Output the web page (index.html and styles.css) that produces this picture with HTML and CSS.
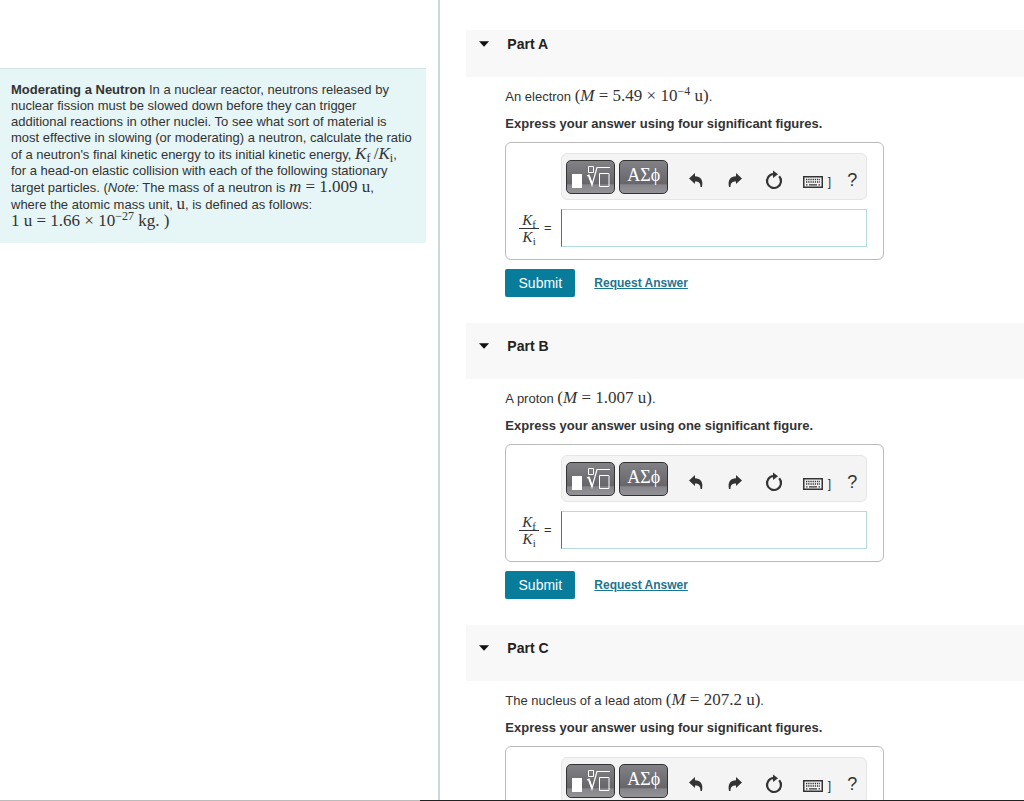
FILE: index.html
```html
<!DOCTYPE html>
<html lang="en">
<head>
<meta charset="utf-8">
<title>Moderating a Neutron</title>
<link rel="stylesheet" href="styles.css">
</head>
<body>
<svg class="sprite" aria-hidden="true">
  <symbol id="i-template" viewBox="0 0 40 28">
    <rect x="1" y="11" width="10" height="14" fill="#fff"/>
    <path d="M17.500 3.500h5v6h-5z M28.500 10.500h9.500v13h-9.500z" fill="none" stroke="#fff"/>
    <path d="M16 13l2-1 3 10 5-17.500h13" fill="none" stroke="#fff" stroke-width="1.200"/>
    <path d="M18 13l3 8" stroke="#fff" stroke-width="2"/>
  </symbol>
  <symbol id="i-undo" viewBox="0 0 16 16">
    <path d="M1 6.500 7 1v3.300c5.500 0 8.500 3.500 7 10.700h-1.500C12.500 11 11 9.500 7 9.500V12z"/>
  </symbol>
  <symbol id="i-redo" viewBox="0 0 16 16">
    <path d="M15 6.500 9 1v3.300c-5.500 0-8.500 3.500-7 10.700h1.500C3.500 11 5 9.500 9 9.500V12z"/>
  </symbol>
  <symbol id="i-reset" viewBox="0 0 20 20">
    <path d="M15.200 6.300A7 7 0 1 1 9.500 4" fill="none" stroke="#333" stroke-width="2.200"/>
    <path d="M9 .5l5 3.800L9 8z"/>
  </symbol>
  <symbol id="i-keyboard" viewBox="0 0 20 12">
    <path d="M.75.75h18.500v10.500H.750z" fill="none" stroke="#333" stroke-width="1.500"/>
    <path d="M3 3.500h14M3 6h14" stroke="#333" stroke-width="1.500" stroke-dasharray="1.300 .9"/>
    <path d="M3 8.800h1.500M6 8.800h8M15.500 8.800H17" stroke="#333" stroke-width="1.300"/>
  </symbol>
  <symbol id="i-caret" viewBox="0 0 12 6"><path d="M0 0h11L5.500 6z" fill="#111"/></symbol>
</svg>
<div class="page">
  <aside class="side">
    <div class="problem">
      <p><strong>Moderating a Neutron</strong> In a nuclear reactor, neutrons released by nuclear fission must be slowed down before they can trigger additional reactions in other nuclei. To see what sort of material is most effective in slowing (or moderating) a neutron, calculate the ratio of a neutron's final kinetic energy to its initial kinetic energy, <span class="math"><i>K</i><sub>f</sub>&thinsp;/<i>K</i><sub>i</sub></span>, for a head-on elastic collision with each of the following stationary target particles. (<em>Note:</em> The mass of a neutron is <span class="math"><i>m</i> = 1.009 u</span>,<br>where the atomic mass unit, <span class="math">u</span>, is defined as follows:<br><span class="math">1 u = 1.66 × 10<sup>−27</sup> kg. )</span></p>
    </div>
  </aside>
  <main class="main">
    <section class="part">
      <header class="part-head first"><svg class="caret"><use href="#i-caret"/></svg><h2>Part A</h2></header>
      <form class="part-body">
        <p class="question">An electron <span class="math">(<i>M</i> = 5.49 × 10<sup>−4</sup> u)</span>.</p>
        <p class="hint">Express your answer using four significant figures.</p>
        <div class="answer">
          <div class="toolbar">
            <button type="button" class="dark" aria-label="Templates"><svg class="template"><use href="#i-template"/></svg></button>
            <button type="button" class="dark greek">ΑΣϕ</button>
            <button type="button" class="tool" aria-label="Undo"><svg><use href="#i-undo"/></svg></button>
            <button type="button" class="tool" aria-label="Redo"><svg><use href="#i-redo"/></svg></button>
            <button type="button" class="tool" aria-label="Reset"><svg class="reset"><use href="#i-reset"/></svg></button>
            <button type="button" class="tool keys" aria-label="Keyboard shortcuts"><svg class="keyboard"><use href="#i-keyboard"/></svg><span>]</span></button>
            <button type="button" class="tool help">?</button>
          </div>
          <label class="ratio" for="a"><span class="frac"><span><i>K</i><sub>f</sub></span><span><i>K</i><sub>i</sub></span></span><span>=</span></label>
          <input id="a" type="text">
        </div>
        <div class="actions"><button type="submit" class="submit">Submit</button><a href="#">Request Answer</a></div>
      </form>
    </section>
    <section class="part">
      <header class="part-head"><svg class="caret"><use href="#i-caret"/></svg><h2>Part B</h2></header>
      <form class="part-body">
        <p class="question">A proton <span class="math">(<i>M</i> = 1.007 u)</span>.</p>
        <p class="hint">Express your answer using one significant figure.</p>
        <div class="answer">
          <div class="toolbar">
            <button type="button" class="dark" aria-label="Templates"><svg class="template"><use href="#i-template"/></svg></button>
            <button type="button" class="dark greek">ΑΣϕ</button>
            <button type="button" class="tool" aria-label="Undo"><svg><use href="#i-undo"/></svg></button>
            <button type="button" class="tool" aria-label="Redo"><svg><use href="#i-redo"/></svg></button>
            <button type="button" class="tool" aria-label="Reset"><svg class="reset"><use href="#i-reset"/></svg></button>
            <button type="button" class="tool keys" aria-label="Keyboard shortcuts"><svg class="keyboard"><use href="#i-keyboard"/></svg><span>]</span></button>
            <button type="button" class="tool help">?</button>
          </div>
          <label class="ratio" for="b"><span class="frac"><span><i>K</i><sub>f</sub></span><span><i>K</i><sub>i</sub></span></span><span>=</span></label>
          <input id="b" type="text">
        </div>
        <div class="actions"><button type="submit" class="submit">Submit</button><a href="#">Request Answer</a></div>
      </form>
    </section>
    <section class="part">
      <header class="part-head"><svg class="caret"><use href="#i-caret"/></svg><h2>Part C</h2></header>
      <form class="part-body">
        <p class="question">The nucleus of a lead atom <span class="math">(<i>M</i> = 207.2 u)</span>.</p>
        <p class="hint">Express your answer using four significant figures.</p>
        <div class="answer">
          <div class="toolbar">
            <button type="button" class="dark" aria-label="Templates"><svg class="template"><use href="#i-template"/></svg></button>
            <button type="button" class="dark greek">ΑΣϕ</button>
            <button type="button" class="tool" aria-label="Undo"><svg><use href="#i-undo"/></svg></button>
            <button type="button" class="tool" aria-label="Redo"><svg><use href="#i-redo"/></svg></button>
            <button type="button" class="tool" aria-label="Reset"><svg class="reset"><use href="#i-reset"/></svg></button>
            <button type="button" class="tool keys" aria-label="Keyboard shortcuts"><svg class="keyboard"><use href="#i-keyboard"/></svg><span>]</span></button>
            <button type="button" class="tool help">?</button>
          </div>
        </div>
      </form>
    </section>
  </main>
</div>
<div class="edge"></div>
</body>
</html>
```
FILE: styles.css
```css
* { box-sizing: border-box; }
body {
  margin: 0;
  height: 100vh;
  overflow: hidden;
  display: flex;
  flex-direction: column;
  background: #fff;
  color: #333;
  font: 13px/16px "Liberation Sans", Arial, sans-serif;
}
p, h2 { margin: 0; }
button { font: inherit; margin: 0; padding: 0; border: 0; cursor: pointer; }
.sprite { position: absolute; width: 0; height: 0; }
.page { flex: 1; min-height: 0; overflow: hidden; display: grid; grid-template-columns: 43% 1fr; }

.side { border-right: 2px solid #ccd7e0; padding: 68px 12px 0 0; }
.problem { background: #e6f5f6; border-top: 1px solid #d5e3e5; padding: 13px 12px 13px 11px; }

.math { font-family: "Liberation Serif", "Times New Roman", serif; font-size: 17px; line-height: 16px; white-space: nowrap; }
.math sub, .math sup { font-size: 12px; line-height: 0; }
.math sub { vertical-align: -3px; }
.math sup { vertical-align: 6px; }

.main { padding: 30px 0 0 26px; min-width: 0; }
.part-head { display: flex; align-items: center; gap: 17px; height: 56px; padding: 0 13px 10px; background: #f8f8f8; }
.part-head.first { height: 47px; padding-bottom: 19px; }
.part-head h2 { font-size: 14px; line-height: 16px; color: #222; }
.caret { width: 11px; height: 6px; }
.part-body { padding: 8px 0 26px 39px; }
.question { line-height: 24px; }
.hint { margin-top: 5px; line-height: 20px; font-weight: bold; }

.answer {
  display: grid;
  grid-template-columns: 42px 306px;
  grid-template-rows: 47px 38px;
  row-gap: 9px;
  width: 379px;
  height: 118px;
  margin-top: 8px;
  padding: 10px 17px 11px 13px;
  border: 1px solid #bbb;
  border-radius: 6px;
}
.toolbar { grid-column: 2; display: flex; align-items: center; padding-left: 4px; background: #f4f4f4; border: 1px solid #e6e6e6; border-radius: 6px; }
.toolbar button { flex: none; }
.dark {
  width: 49px;
  height: 34px;
  margin-right: 4px;
  display: grid;
  place-items: center;
  border: 1px solid #333;
  border-radius: 5px;
  background: linear-gradient(#828286, #66666a 72%, #85858a 74%, #929297);
  color: #fff;
}
.template { width: 40px; height: 28px; }
.toolbar .greek { font: 18px/20px "Liberation Serif", serif; padding-bottom: 4px; margin-right: 8px; }
.tool { width: 39px; height: 34px; padding-top: 7px; display: flex; align-items: center; justify-content: center; gap: 5px; background: none; color: #333; }
.tool svg { width: 16px; height: 16px; fill: #333; }
.tool .reset { width: 20px; height: 20px; }
.tool .keyboard { width: 20px; height: 12px; }
.toolbar .help { width: 24px; font-size: 18px; }
.toolbar .keys { width: 47px; font-size: 12px; padding-top: 11px; }
.ratio { display: flex; align-items: center; gap: 5px; font-size: 13px; }
.frac { font: 15px/16px "Liberation Serif", serif; display: grid; text-align: center; }
.frac > span { padding: 0 3px; }
.frac > span:first-child { border-bottom: 1px solid #333; }
.frac sub { font-size: 11px; line-height: 0; vertical-align: -3px; }
.answer input { width: 100%; height: 38px; padding: 0 8px; border: 1px solid #b4dbe2; border-left-color: #2d7f92; background: #fff; font: inherit; }

.actions { display: flex; align-items: center; gap: 19px; margin-top: 9px; }
.submit { width: 70px; height: 28px; border-radius: 2px; background: #077c9b; color: #fff; font-size: 14px; }
.actions a { color: #1a7690; font-size: 12px; font-weight: bold; }

.edge { height: 1px; background: linear-gradient(90deg, #bbb 41%, #222 41%); }
```
